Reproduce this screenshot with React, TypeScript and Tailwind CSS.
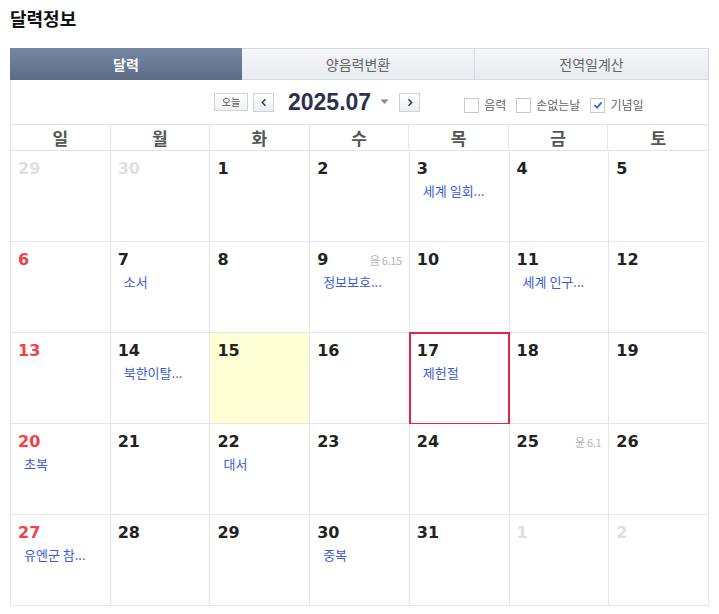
import React from 'react'

type Day = {
  n: number
  dim?: boolean
  event?: string
  lunar?: string
  today?: boolean
  selected?: boolean
}

const weeks: Day[][] = [
  [{ n: 29, dim: true }, { n: 30, dim: true }, { n: 1 }, { n: 2 }, { n: 3, event: '세계 일회...' }, { n: 4 }, { n: 5 }],
  [{ n: 6 }, { n: 7, event: '소서' }, { n: 8 }, { n: 9, event: '정보보호...', lunar: '음 6.15' }, { n: 10 }, { n: 11, event: '세계 인구...' }, { n: 12 }],
  [{ n: 13 }, { n: 14, event: '북한이탈...' }, { n: 15, today: true }, { n: 16 }, { n: 17, event: '제헌절', selected: true }, { n: 18 }, { n: 19 }],
  [{ n: 20, event: '초복' }, { n: 21 }, { n: 22, event: '대서' }, { n: 23 }, { n: 24 }, { n: 25, lunar: '윤 6.1' }, { n: 26 }],
  [{ n: 27, event: '유엔군 참...' }, { n: 28 }, { n: 29 }, { n: 30, event: '중복' }, { n: 31 }, { n: 1, dim: true }, { n: 2, dim: true }],
]

const weekdays = ['일', '월', '화', '수', '목', '금', '토']

const Checkbox = ({ label, checked }: { label: string; checked?: boolean }) => (
  <label className="flex items-center gap-[5px] text-[12px] text-[#666]">
    <span className="w-[15px] h-[15px] border border-[#c9c9c9] bg-white flex items-center justify-center">
      {checked && (
        <svg width="10" height="10" viewBox="0 0 10 10">
          <path d="M1.5 5.2 L4 7.6 L8.6 2.4" fill="none" stroke="#2f6dc4" strokeWidth="1.8" />
        </svg>
      )}
    </span>
    {label}
  </label>
)

const App = () => {
  return (
    <div className="w-[719px] h-[614px] bg-white px-[10px] pt-[7px]" style={{ fontFamily: '"Noto Sans CJK KR", "Noto Sans", sans-serif' }}>
      {/* Title */}
      <h1 className="text-[18px] font-bold text-[#111] leading-[22px]">달력정보</h1>

      {/* Tabs */}
      <div className="mt-[19px] flex h-[32px] text-[14px]">
        <div className="w-[232px] flex items-center justify-center bg-gradient-to-b from-[#7587a0] to-[#5b6d88] text-white font-bold">
          달력
        </div>
        <div className="w-[233px] flex items-center justify-center bg-gradient-to-b from-[#f4f6f9] to-[#e8ebf0] border border-l-0 border-[#d6dae0] text-[#666]">
          양음력변환
        </div>
        <div className="flex-1 flex items-center justify-center bg-gradient-to-b from-[#f4f6f9] to-[#e8ebf0] border border-l-0 border-[#d6dae0] text-[#666]">
          전역일계산
        </div>
      </div>

      {/* Toolbar */}
      <div className="h-[44px] border-x border-[#e3e3e3] flex items-center pl-[203px]">
        <button className="w-[34px] h-[18px] border border-[#cfd3d8] bg-gradient-to-b from-white to-[#f0f1f3] text-[10px] text-[#555] leading-none flex items-center justify-center">
          오늘
        </button>
        <button className="ml-[5px] w-[21px] h-[19px] border border-[#cfd3d8] bg-gradient-to-b from-white to-[#eceef1] flex items-center justify-center">
          <svg width="8" height="9" viewBox="0 0 8 9">
            <path d="M5.5 1.2 L2.3 4.5 L5.5 7.8" fill="none" stroke="#444" strokeWidth="1.6" />
          </svg>
        </button>
        <span className="ml-[14px] text-[23px] font-bold text-[#2c3150] leading-none" style={{ fontFamily: '"Liberation Sans", Arial, sans-serif' }}>
          2025.07
        </span>
        <svg className="ml-[9px]" width="9" height="6" viewBox="0 0 9 6">
          <path d="M0.5 0.5 L8.5 0.5 L4.5 5 Z" fill="#888" />
        </svg>
        <button className="ml-[10px] w-[21px] h-[19px] border border-[#cfd3d8] bg-gradient-to-b from-white to-[#eceef1] flex items-center justify-center">
          <svg width="8" height="9" viewBox="0 0 8 9">
            <path d="M2.5 1.2 L5.7 4.5 L2.5 7.8" fill="none" stroke="#444" strokeWidth="1.6" />
          </svg>
        </button>
        <div className="ml-[44px] mt-[6px] flex items-center gap-[10px]">
          <Checkbox label="음력" />
          <Checkbox label="손없는날" />
          <Checkbox label="기념일" checked />
        </div>
      </div>

      {/* Weekday header */}
      <div className="grid grid-cols-7 h-[27px] border border-[#e3e3e3]">
        {weekdays.map((w, i) => (
          <div
            key={w}
            className={`flex items-center justify-center text-[17px] font-semibold text-[#555] ${i < 6 ? 'border-r border-[#e6e6e6]' : ''}`}
          >
            {w}
          </div>
        ))}
      </div>

      {/* Calendar grid */}
      <div className="border-l border-[#e6e6e6]">
        {weeks.map((week, wi) => (
          <div key={wi} className="grid grid-cols-7 h-[91px]">
            {week.map((d, di) => {
              const color = d.dim ? 'text-[#e0e0e0]' : di === 0 ? 'text-[#f43f45]' : 'text-[#222]'
              return (
                <div
                  key={di}
                  className={`relative border-r border-b border-[#e6e6e6] px-[7px] pt-[8px] ${d.today ? 'bg-[#ffffd6]' : 'bg-white'}`}
                >
                  {d.selected && <div className="absolute -left-px -top-px w-[101px] h-[93px] border-2 border-[#e8214b] pointer-events-none" />}
                  <div className="flex items-start justify-between">
                    <span className={`text-[16px] font-bold leading-[20px] ${color}`} style={{ fontFamily: '"DejaVu Sans", "Noto Sans", sans-serif' }}>
                      {d.n}
                    </span>
                    {d.lunar && (
                      <span className="text-[11px] text-[#b5b5b5] leading-[20px] tracking-[-0.3px]">{d.lunar}</span>
                    )}
                  </div>
                  {d.event && (
                    <div className="mt-[3px] pl-[6px] text-[13px] text-[#3b5bd6] leading-[18px]">{d.event}</div>
                  )}
                </div>
              )
            })}
          </div>
        ))}
      </div>
    </div>
  )
}

export default App
